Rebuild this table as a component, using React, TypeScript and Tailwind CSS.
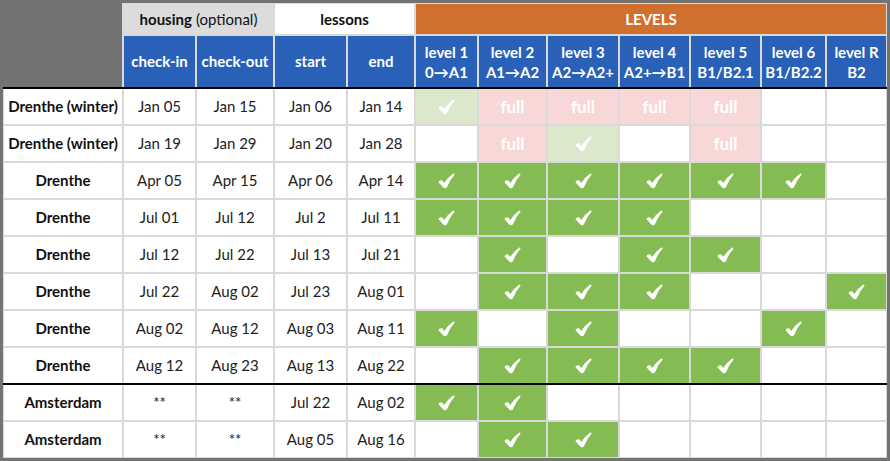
import React from 'react'

type Mark = '' | 'y' | 'ly' | 'full'

const cols = 'grid-cols-[118px_71px_76px_71px_66px_61px_67px_70px_69px_69px_63px_59px]'

const levels = [
  ['level 1', '0→A1'],
  ['level 2', 'A1→A2'],
  ['level 3', 'A2→A2+'],
  ['level 4', 'A2+→B1'],
  ['level 5', 'B1/B2.1'],
  ['level 6', 'B1/B2.2'],
  ['level R', 'B2'],
]

const drenthe: [string, string, string, string, string, Mark[]][] = [
  ['Drenthe (winter)', 'Jan 05', 'Jan 15', 'Jan 06', 'Jan 14', ['ly', 'full', 'full', 'full', 'full', '', '']],
  ['Drenthe (winter)', 'Jan 19', 'Jan 29', 'Jan 20', 'Jan 28', ['', 'full', 'ly', '', 'full', '', '']],
  ['Drenthe', 'Apr 05', 'Apr 15', 'Apr 06', 'Apr 14', ['y', 'y', 'y', 'y', 'y', 'y', '']],
  ['Drenthe', 'Jul 01', 'Jul 12', 'Jul 2', 'Jul 11', ['y', 'y', 'y', 'y', '', '', '']],
  ['Drenthe', 'Jul 12', 'Jul 22', 'Jul 13', 'Jul 21', ['', 'y', '', 'y', 'y', '', '']],
  ['Drenthe', 'Jul 22', 'Aug 02', 'Jul 23', 'Aug 01', ['', 'y', 'y', 'y', '', '', 'y']],
  ['Drenthe', 'Aug 02', 'Aug 12', 'Aug 03', 'Aug 11', ['y', '', 'y', '', '', 'y', '']],
  ['Drenthe', 'Aug 12', 'Aug 23', 'Aug 13', 'Aug 22', ['', 'y', 'y', 'y', 'y', '', '']],
]

const amsterdam: typeof drenthe = [
  ['Amsterdam', '**', '**', 'Jul 22', 'Aug 02', ['y', 'y', '', '', '', '', '']],
  ['Amsterdam', '**', '**', 'Aug 05', 'Aug 16', ['', 'y', 'y', '', '', '', '']],
]

// heavy check mark, drawn so it reads like the dingbat in the sheet
function Check() {
  return (
    <svg width="17" height="16" viewBox="0 0 18 17" aria-hidden="true">
      <path
        d="M0.4 9.8 Q1.6 7 4.6 8 L6.6 10.6 Q10.4 4.6 15.8 0.8 Q17.8 0.2 17.4 2 Q12.4 7.2 9.6 14.8 Q8.4 17 6.2 16 Q4 13.6 0.4 9.8 Z"
        fill="white"
      />
    </svg>
  )
}

function LevelCell({ m }: { m: Mark }) {
  if (m === 'y')
    return (
      <div className="bg-[#84bb52] flex items-center justify-center">
        <Check />
      </div>
    )
  if (m === 'ly')
    return (
      <div className="bg-[#dce8cc] flex items-center justify-center">
        <Check />
      </div>
    )
  if (m === 'full')
    return <div className="bg-[#f8d8d6] flex items-center justify-center text-white text-[17px] font-bold">full</div>
  return <div className="bg-white" />
}

function Rows({ rows }: { rows: typeof drenthe }) {
  return (
    <div className={`grid ${cols} auto-rows-[35px] gap-[2px] bg-[#d9d9d9] px-px`}>
      {rows.map((r, i) => (
        <React.Fragment key={i}>
          <div className="bg-white flex items-center justify-center font-bold text-[15px] text-[#111] whitespace-nowrap">{r[0]}</div>
          {r.slice(1, 5).map((d, j) => (
            <div key={j} className="bg-white flex items-center justify-center text-[15px] text-[#222]">
              {d as string}
            </div>
          ))}
          {r[5].map((m, j) => (
            <LevelCell key={j} m={m} />
          ))}
        </React.Fragment>
      ))}
    </div>
  )
}

export default function App() {
  return (
    <div className="w-[890px] h-[461px] bg-[#737373] p-[3px] font-['Lato','Noto_Sans',sans-serif] overflow-hidden">
      <div className="flex flex-col">
        <div className={`grid ${cols} grid-rows-[30px_51px] gap-[2px] bg-[#d9d9d9] pt-px px-px`}>
          <div className="row-span-2 bg-[#737373] -mt-px -ml-px" />
          <div className="col-span-2 bg-[#dcdcdc] flex items-center justify-center text-[15px] text-[#111]">
            <span className="font-bold">housing</span>
            <span className="ml-1">(optional)</span>
          </div>
          <div className="col-span-2 bg-white flex items-center justify-center text-[15px] font-bold text-[#111]">lessons</div>
          <div className="col-span-7 bg-[#d0702f] flex items-center justify-center text-[15px] font-bold text-white">LEVELS</div>
          {['check-in', 'check-out', 'start', 'end'].map((h) => (
            <div key={h} className="bg-[#2a61b8] flex items-center justify-center text-[15px] font-bold text-white whitespace-nowrap">
              {h}
            </div>
          ))}
          {levels.map(([a, b]) => (
            <div key={a} className="bg-[#2a61b8] flex flex-col items-center justify-center text-[15px] leading-[20px] font-bold text-white whitespace-nowrap">
              <span>{a}</span>
              <span>{b}</span>
            </div>
          ))}
        </div>
        <div className="h-[2px] bg-black" />
        <Rows rows={drenthe} />
        <div className="h-[2px] bg-black" />
        <div className="bg-[#d9d9d9] pb-px">
          <Rows rows={amsterdam} />
        </div>
      </div>
    </div>
  )
}
